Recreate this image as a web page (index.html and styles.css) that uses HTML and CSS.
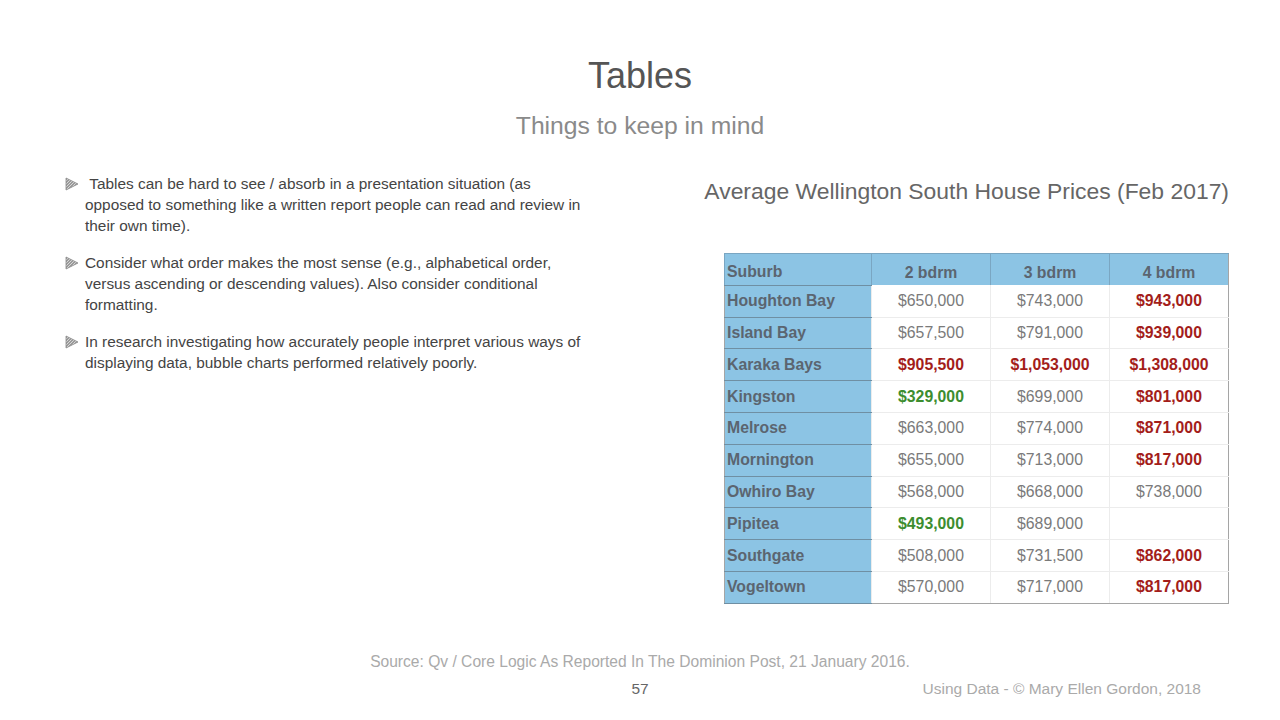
FILE: index.html
```html
<!DOCTYPE html>
<html lang="en">
<head>
<meta charset="utf-8">
<title>Tables</title>
<link rel="stylesheet" href="styles.css">
</head>
<body>
<div class="slide">
  <header class="head">
    <h1 class="title">Tables</h1>
    <p class="subtitle">Things to keep in mind</p>
  </header>
  <main class="main">
    <ul class="bullets">
      <li class="bullet">
        <svg class="arrow" viewBox="0 0 14 14" width="14" height="14"><defs><clipPath id="tri1"><polygon points="1,1 13,7 1,13"/></clipPath></defs><g clip-path="url(#tri1)"><rect x="0" y="0" width="14" height="14" fill="#9a9a9a"/><g stroke="#d8d8d8" stroke-width="1"><line x1="0" y1="5" x2="9" y2="-4"/><line x1="0" y1="8" x2="11" y2="-3"/><line x1="0" y1="11" x2="12" y2="-1"/><line x1="0" y1="14" x2="14" y2="0"/><line x1="2" y1="15" x2="16" y2="1"/></g></g><polygon points="1,1 13,7 1,13" fill="none" stroke="#8a8a8a" stroke-width="0.8"/></svg>
        <span class="btext">&nbsp;Tables can be hard to see / absorb in a presentation situation (as opposed to something like a written report people can read and review in their own time).</span>
      </li>
      <li class="bullet">
        <svg class="arrow" viewBox="0 0 14 14" width="14" height="14"><defs><clipPath id="tri2"><polygon points="1,1 13,7 1,13"/></clipPath></defs><g clip-path="url(#tri2)"><rect x="0" y="0" width="14" height="14" fill="#9a9a9a"/><g stroke="#d8d8d8" stroke-width="1"><line x1="0" y1="5" x2="9" y2="-4"/><line x1="0" y1="8" x2="11" y2="-3"/><line x1="0" y1="11" x2="12" y2="-1"/><line x1="0" y1="14" x2="14" y2="0"/><line x1="2" y1="15" x2="16" y2="1"/></g></g><polygon points="1,1 13,7 1,13" fill="none" stroke="#8a8a8a" stroke-width="0.8"/></svg>
        <span class="btext">Consider what order makes the most sense (e.g., alphabetical order, versus ascending or descending values). Also consider conditional formatting.</span>
      </li>
      <li class="bullet">
        <svg class="arrow" viewBox="0 0 14 14" width="14" height="14"><defs><clipPath id="tri3"><polygon points="1,1 13,7 1,13"/></clipPath></defs><g clip-path="url(#tri3)"><rect x="0" y="0" width="14" height="14" fill="#9a9a9a"/><g stroke="#d8d8d8" stroke-width="1"><line x1="0" y1="5" x2="9" y2="-4"/><line x1="0" y1="8" x2="11" y2="-3"/><line x1="0" y1="11" x2="12" y2="-1"/><line x1="0" y1="14" x2="14" y2="0"/><line x1="2" y1="15" x2="16" y2="1"/></g></g><polygon points="1,1 13,7 1,13" fill="none" stroke="#8a8a8a" stroke-width="0.8"/></svg>
        <span class="btext">In research investigating how accurately people interpret various ways of displaying data, bubble charts performed relatively poorly.</span>
      </li>
    </ul>
    <section class="panel">
      <h2 class="table-title">Average Wellington South House Prices (Feb 2017)</h2>
      <table class="prices">
        <thead>
          <tr><th class="sub">Suburb</th><th>2 bdrm</th><th>3 bdrm</th><th>4 bdrm</th></tr>
        </thead>
        <tbody>
          <tr><th class="sub">Houghton Bay</th><td>$650,000</td><td>$743,000</td><td class="hi">$943,000</td></tr>
          <tr><th class="sub">Island Bay</th><td>$657,500</td><td>$791,000</td><td class="hi">$939,000</td></tr>
          <tr><th class="sub">Karaka Bays</th><td class="hi">$905,500</td><td class="hi">$1,053,000</td><td class="hi">$1,308,000</td></tr>
          <tr><th class="sub">Kingston</th><td class="lo">$329,000</td><td>$699,000</td><td class="hi">$801,000</td></tr>
          <tr><th class="sub">Melrose</th><td>$663,000</td><td>$774,000</td><td class="hi">$871,000</td></tr>
          <tr><th class="sub">Mornington</th><td>$655,000</td><td>$713,000</td><td class="hi">$817,000</td></tr>
          <tr><th class="sub">Owhiro Bay</th><td>$568,000</td><td>$668,000</td><td>$738,000</td></tr>
          <tr><th class="sub">Pipitea</th><td class="lo">$493,000</td><td>$689,000</td><td></td></tr>
          <tr><th class="sub">Southgate</th><td>$508,000</td><td>$731,500</td><td class="hi">$862,000</td></tr>
          <tr><th class="sub">Vogeltown</th><td>$570,000</td><td>$717,000</td><td class="hi">$817,000</td></tr>
        </tbody>
      </table>
    </section>
  </main>
  <footer class="foot">
    <p class="source">Source: Qv / Core Logic As Reported In The Dominion Post, 21 January 2016.</p>
    <div class="foot-row">
      <span></span>
      <span class="page">57</span>
      <span class="credit">Using Data - © Mary Ellen Gordon, 2018</span>
    </div>
  </footer>
</div>
</body>
</html>
```

FILE: styles.css
```css
* { box-sizing: border-box; }
html, body { margin: 0; padding: 0; background: #fff; }
body { font-family: "Liberation Sans", Arial, sans-serif; }

.slide {
  width: 1280px;
  height: 720px;
  display: flex;
  flex-direction: column;
  overflow: hidden;
}

.head { text-align: center; padding-top: 54px; }
.title {
  margin: 0;
  font-weight: normal;
  font-size: 36px;
  line-height: 44px;
  color: #555;
}
.subtitle {
  margin: 13px 0 0;
  font-size: 24.7px;
  line-height: 30px;
  color: #8a8a8a;
}

.main {
  flex: 1;
  display: flex;
  justify-content: space-between;
  padding: 32px 51px 0 64px;
}

.bullets {
  list-style: none;
  margin: 0;
  padding: 0;
  width: 530px;
}
.bullet {
  display: flex;
  gap: 6px;
  font-size: 15.4px;
  line-height: 21px;
  color: #444;
  margin-bottom: 16px;
}
.btext { width: 506px; }
.arrow { flex: none; margin-top: 4px; margin-left: 1px; }

.panel {
  display: flex;
  flex-direction: column;
  align-items: flex-end;
  padding-top: 4px;
}
.table-title {
  margin: 0;
  font-weight: normal;
  font-size: 22.9px;
  line-height: 28px;
  color: #666;
}

.prices {
  margin-top: 48px;
  border-collapse: collapse;
  border: 1px solid #a5a5a5;
  font-size: 15.8px;
}
.prices tr { height: 31.8px; }
.prices th, .prices td { padding: 0 2px; }
.prices thead th {
  background: #8cc4e4;
  color: #5b6570;
  font-weight: bold;
  text-align: center;
  border-left: 1px solid #7aa6c2;
  border-top: 1px solid #7aa6c2;
  padding-top: 6px;
}
.prices thead th.sub { text-align: left; }
.prices th.sub {
  width: 147px;
  text-align: left;
  background: #8cc4e4;
  color: #5b6570;
  font-weight: bold;
  border-bottom: 1px solid #6f8fa3;
  padding-left: 2px;
}
.prices tbody td {
  width: 119px;
  text-align: center;
  color: #7a7a7a;
  border-left: 1px solid #ececec;
  border-bottom: 1px solid #ececec;
}
.prices tbody tr:last-child td { border-bottom: 1px solid #a5a5a5; }
.prices td.hi { color: #a31d1a; font-weight: bold; }
.prices td.lo { color: #3c8d2f; font-weight: bold; }

.foot { padding-bottom: 21px; }
.source {
  margin: 0 0 7px;
  text-align: center;
  font-size: 15.6px;
  line-height: 20px;
  color: #aaa;
}
.foot-row {
  display: grid;
  grid-template-columns: 1fr auto 1fr;
  font-size: 15.5px;
  line-height: 20px;
}
.page { color: #666; }
.credit { text-align: right; color: #aaa; padding-right: 79px; }
```
